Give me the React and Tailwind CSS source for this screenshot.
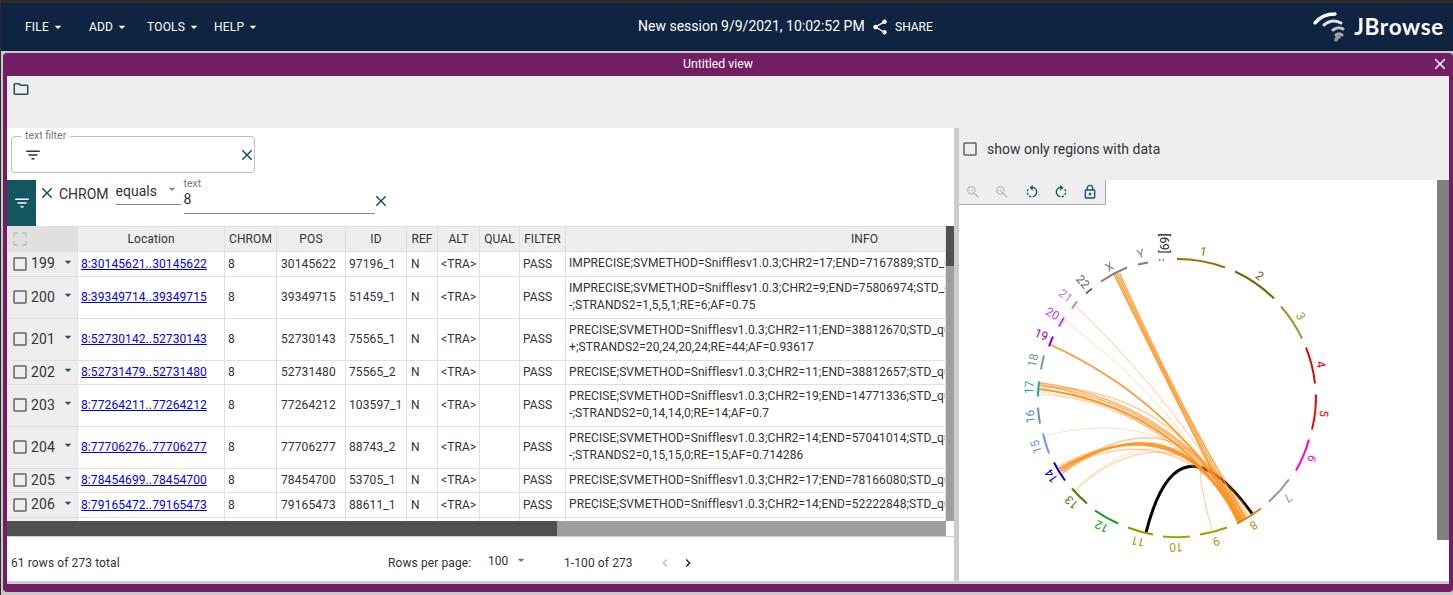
import React from "react";

const P = {
  close: "M19 6.41L17.59 5 12 10.59 6.41 5 5 6.41 10.59 12 5 17.59 6.41 19 12 13.41 17.59 19 19 17.59 13.41 12z",
  filter: "M10 18h4v-2h-4v2zM3 6v2h18V6H3zm3 7h12v-2H6v2z",
  drop: "M7 10l5 5 5-5z",
  share: "M18 16.08c-.76 0-1.44.3-1.96.77L8.91 12.7c.05-.23.09-.46.09-.7s-.04-.47-.09-.7l7.05-4.11c.54.5 1.25.81 2.04.81 1.66 0 3-1.34 3-3s-1.34-3-3-3-3 1.34-3 3c0 .24.04.47.09.7L8.04 9.81C7.5 9.31 6.79 9 6 9c-1.66 0-3 1.34-3 3s1.34 3 3 3c.79 0 1.5-.31 2.04-.81l7.12 4.16c-.05.21-.08.43-.08.65 0 1.61 1.31 2.92 2.92 2.92 1.61 0 2.92-1.31 2.92-2.92s-1.31-2.92-2.92-2.92z",
  check: "M19 5v14H5V5h14m0-2H5c-1.1 0-2 .9-2 2v14c0 1.1.9 2 2 2h14c1.1 0 2-.9 2-2V5c0-1.1-.9-2-2-2z",
  crop: "M3 5v4h2V5h4V3H5c-1.1 0-2 .9-2 2zm2 10H3v4c0 1.1.9 2 2 2h4v-2H5v-4zm14 4h-4v2h4c1.1 0 2-.9 2-2v-4h-2v4zm0-16h-4v2h4v4h2V5c0-1.1-.9-2-2-2z",
  folder: "M9.17 6l2 2H20v10H4V6h5.17M10 4H4c-1.1 0-1.99.9-1.99 2L2 18c0 1.1.9 2 2 2h16c1.1 0 2-.9 2-2V8c0-1.1-.9-2-2-2h-8l-2-2z",
  zoomOut: "M15.5 14h-.79l-.28-.27C15.41 12.59 16 11.11 16 9.5 16 5.91 13.09 3 9.5 3S3 5.91 3 9.5 5.91 16 9.5 16c1.61 0 3.09-.59 4.23-1.57l.27.28v.79l5 4.99L20.49 19l-4.99-5zm-6 0C7.01 14 5 11.99 5 9.5S7.01 5 9.5 5 14 7.01 14 9.5 11.99 14 9.5 14zM7 9h5v1H7z",
  zoomIn: "M15.5 14h-.79l-.28-.27C15.41 12.59 16 11.11 16 9.5 16 5.91 13.09 3 9.5 3S3 5.91 3 9.5 5.91 16 9.5 16c1.61 0 3.09-.59 4.23-1.57l.27.28v.79l5 4.99L20.49 19l-4.99-5zm-6 0C7.01 14 5 11.99 5 9.5S7.01 5 9.5 5 14 7.01 14 9.5 11.99 14 9.5 14zM12 10h-2v2H9v-2H7V9h2V7h1v2h2v1z",
  rotL: "M7.11 8.53L5.7 7.11C4.8 8.27 4.24 9.61 4.07 11h2.02c.14-.87.49-1.72 1.02-2.47zM6.09 13H4.07c.17 1.39.72 2.73 1.62 3.89l1.41-1.42c-.52-.75-.87-1.59-1.01-2.47zm1.01 5.32c1.16.9 2.51 1.44 3.9 1.61V17.9c-.87-.15-1.71-.49-2.46-1.03L7.1 18.32zM13 4.07V1L8.45 5.55 13 10V6.09c2.84.48 5 2.94 5 5.91s-2.16 5.43-5 5.91v2.02c3.95-.49 7-3.85 7-7.93s-3.05-7.44-7-7.93z",
  rotR: "M15.55 5.55L11 1v3.07C7.06 4.56 4 7.92 4 12s3.05 7.44 7 7.93v-2.02c-2.84-.48-5-2.94-5-5.91s2.16-5.43 5-5.91V10l4.55-4.45zM19.93 11c-.17-1.39-.72-2.73-1.62-3.89l-1.42 1.42c.54.75.88 1.6 1.02 2.47h2.02zM13 17.9v2.02c1.39-.17 2.74-.71 3.9-1.61l-1.44-1.44c-.75.54-1.59.89-2.46 1.03zm3.89-2.42l1.42 1.41c.9-1.16 1.45-2.5 1.62-3.89h-2.02c-.14.87-.48 1.72-1.02 2.48z",
  lock: "M18 8h-1V6c0-2.76-2.24-5-5-5S7 3.24 7 6v2H6c-1.1 0-2 .9-2 2v10c0 1.1.9 2 2 2h12c1.1 0 2-.9 2-2V10c0-1.1-.9-2-2-2zM9 6c0-1.66 1.34-3 3-3s3 1.34 3 3v2H9V6zm9 14H6V10h12v10zm-6-3c1.1 0 2-.9 2-2s-.9-2-2-2-2 .9-2 2 .9 2 2 2z",
  left: "M15.41 7.41L14 6l-6 6 6 6 1.41-1.41L10.83 12z",
  right: "M10 6L8.59 7.41 13.17 12l-4.58 4.59L10 18l6-6z",
};

const Icon = ({ d, className }) => (
  <svg viewBox="0 0 24 24" fill="currentColor" className={"shrink-0 " + className}>
    <path d={d} />
  </svg>
);

const menus = [
  ["FILE", "w-[64px]"],
  ["ADD", "w-[58px]"],
  ["TOOLS", "w-[67px]"],
  ["HELP", "w-[60px]"],
];

const cols = "grid grid-cols-[71px_147px_52px_69px_61px_31px_42px_40px_46px_380px]";
const cellB = "border-r border-b border-[#e0e0e0]";
const cell = cellB + " pb-[1px]";

const rows = [
  ["199", "8:30145621..30145622", "30145622", "97196_1", "h-[25px]", ["IMPRECISE;SVMETHOD=Snifflesv1.0.3;CHR2=17;END=7167889;STD_quant_start=14.5"]],
  ["200", "8:39349714..39349715", "39349715", "51459_1", "h-[42px]", ["IMPRECISE;SVMETHOD=Snifflesv1.0.3;CHR2=9;END=75806974;STD_quant_start=12.5", "-;STRANDS2=1,5,5,1;RE=6;AF=0.75"]],
  ["201", "8:52730142..52730143", "52730143", "75565_1", "h-[42px]", ["PRECISE;SVMETHOD=Snifflesv1.0.3;CHR2=11;END=38812670;STD_quant_start=0", "+;STRANDS2=20,24,20,24;RE=44;AF=0.93617"]],
  ["202", "8:52731479..52731480", "52731480", "75565_2", "h-[24px]", ["PRECISE;SVMETHOD=Snifflesv1.0.3;CHR2=11;END=38812657;STD_quant_start=0"]],
  ["203", "8:77264211..77264212", "77264212", "103597_1", "h-[42px]", ["PRECISE;SVMETHOD=Snifflesv1.0.3;CHR2=19;END=14771336;STD_quant_start=0", "-;STRANDS2=0,14,14,0;RE=14;AF=0.7"]],
  ["204", "8:77706276..77706277", "77706277", "88743_2", "h-[42px]", ["PRECISE;SVMETHOD=Snifflesv1.0.3;CHR2=14;END=57041014;STD_quant_start=0", "-;STRANDS2=0,15,15,0;RE=15;AF=0.714286"]],
  ["205", "8:78454699..78454700", "78454700", "53705_1", "h-[24px]", ["PRECISE;SVMETHOD=Snifflesv1.0.3;CHR2=17;END=78166080;STD_quant_start=0"]],
  ["206", "8:79165472..79165473", "79165473", "88611_1", "h-[25px]", ["PRECISE;SVMETHOD=Snifflesv1.0.3;CHR2=14;END=52222848;STD_quant_start=0"]],
];

const headers = ["Location", "CHROM", "POS", "ID", "REF", "ALT", "QUAL", "FILTER"];

const arcs = [
  ["1", "#a36a00", 1177, 258.5, 1225, 267, 1203, 252, 10],
  ["2", "#696900", 1235, 271, 1274, 298, 1259, 276, 35],
  ["3", "#999926", 1281, 306, 1302, 338, 1300, 316, 60],
  ["4", "#e00000", 1306, 347, 1315, 383, 1320, 364, 80],
  ["5", "#ff0000", 1316, 394, 1312, 429, 1323, 413, 97],
  ["6", "#ff00cc", 1309, 439, 1296, 470, 1311, 458, 115],
  ["7", "#a38a8a", 1289, 479, 1269, 501, 1287, 497, 133],
  ["8", "#c98a10", 1261, 508, 1237, 523, 1253, 524, 145],
  ["9", "#b09800", 1227, 527, 1200, 534, 1216, 540, 163],
  ["10", "#a3a300", 1190, 536, 1163, 536, 1176, 546, 180],
  ["11", "#8f9900", 1153, 534, 1128, 527, 1138, 540, 192],
  ["12", "#00a300", 1118, 523, 1095, 510, 1102, 525, 207],
  ["13", "#4d7a00", 1087, 503, 1072, 488, 1072, 501, 222],
  ["14", "#0000cc", 1065, 480, 1054, 462, 1052, 475, 236],
  ["15", "#6699ff", 1049, 453, 1043, 433, 1037, 446, 252],
  ["16", "#6e8fb3", 1040, 423, 1038, 407, 1031, 416, 265],
  ["17", "#00b3a6", 1038, 396, 1039, 381, 1030, 387, 271],
  ["18", "#7a9999", 1041, 369, 1044, 355, 1034, 360, 283],
  ["19", "#9900cc", 1049, 346, 1053, 336, 1041, 335, 22],
  ["20", "#cc33ff", 1059, 326, 1064, 317, 1052, 314, 30],
  ["21", "#b380e6", 1072, 308, 1077, 301, 1065, 296, 38],
  ["22", "#666666", 1086, 293, 1092, 288, 1082, 282, 48],
  ["X", "#808080", 1101, 281, 1127, 267, 1110, 267, 330],
  ["Y", "#808080", 1138, 264, 1148, 262, 1141, 254, 345],
];

const chords = [
  [1114, 274, 1238, 522, 0.85, 1.4, 402], [1115.5, 273.5, 1240, 521, 0.85, 1.4, 402], [1117.5, 273, 1243, 520, 0.85, 1.4, 402], [1119.5, 272.5, 1246, 518, 0.85, 1.4, 402],
  [1075, 305, 1243, 518, 0.5, 1, 402], [1063, 319, 1238, 520, 0.3, 1, 402], [1050, 344, 1241, 520, 0.95, 1.8, 402],
  [1039, 382, 1245, 518, 0.7, 1.6, 402], [1039, 384.5, 1243, 519, 0.7, 1.6, 404], [1039, 388.5, 1239, 521, 0.95, 2, 406], [1039, 394, 1248, 516, 0.3, 1, 402],
  [1046, 435, 1250, 513, 0.3, 1, 402],
  [1058, 466, 1244, 519, 0.5, 1.4, 402], [1059, 468, 1241, 521, 0.95, 1.8, 402], [1060, 469.5, 1240, 521, 0.8, 1.6, 398], [1061, 471, 1239, 522, 0.8, 1.6, 395], [1062, 473, 1238, 522, 0.6, 1.4, 392],
  [1073, 489, 1246, 517, 0.3, 1, 402], [1075, 490, 1248, 516, 0.3, 1, 402],
  [1212, 530, 1247, 516, 0.5, 1, 402],
  [1039, 391, 1247, 517, 0.35, 1, 412], [1062, 470, 1250, 514, 0.3, 1, 388], [1040, 386, 1251, 513, 0.25, 1, 418], [1116, 273, 1249, 515, 0.3, 1, 410],
  [1040, 383, 1240, 521, 0.45, 1.4, 416], [1041, 386, 1242, 520, 0.45, 1.4, 388], [1060, 468, 1243, 519, 0.45, 1.4, 412], [1063, 472, 1245, 518, 0.4, 1.2, 384], [1075, 490, 1238, 522, 0.3, 1, 392],
];

function Circular() {
  return (
    <svg viewBox="959 180 478 400" className="w-full h-full block">
      <g fill="none" strokeLinecap="butt">
        <path d="M1146 532 Q1177 410 1252 513" stroke="#000" strokeWidth="3" />
        {chords.map(([a, b, c, d, o, w, cy], i) => (
          <path key={i} d={`M${a} ${b} Q1177 ${cy} ${c} ${d}`} stroke="#ff9322" strokeOpacity={o} strokeWidth={w} />
        ))}
        {arcs.map(([n, col, a, b, c, d]) => (
          <path key={n} d={`M${a} ${b} A139 139 0 0 1 ${c} ${d}`} stroke={col} strokeWidth="2" />
        ))}
        <path d="M1159 259.5 L1166 259" stroke="#888" strokeWidth="2" strokeDasharray="1.5 2" />
      </g>
      <g fontSize="12" textAnchor="middle" dominantBaseline="middle" fontFamily="Roboto, sans-serif">
        {arcs.map(([n, col, , , , , x, y, r]) => (
          <text key={n} x={x} y={y} fill={col} transform={`rotate(${r} ${x} ${y})`}>{n}</text>
        ))}
        <text x="1163" y="243" fill="#222" transform="rotate(90 1163 243)">[69]</text>
      </g>
    </svg>
  );
}

export default function App() {
  return (
    <div className="w-[1453px] h-[595px] overflow-hidden bg-[#2b2b2b] pt-[3px] pl-[1px] font-[Roboto,sans-serif] text-[#333]">
      <div className="h-[592px] bg-[#c9c9c9] flex flex-col">
        <header className="h-[48px] shrink-0 bg-[#0f2440] text-white flex items-center">
          <nav className="w-[637px] pl-[24px] flex items-center text-[12px] tracking-[0.2px]">
            {menus.map(([m, w]) => (
              <div key={m} className={"flex items-center " + w}>
                <span>{m}</span>
                <Icon d={P.drop} className="w-[16px] h-[16px] ml-[1px]" />
              </div>
            ))}
          </nav>
          <span className="text-[14px] leading-none whitespace-nowrap w-[233px] mt-[-2px]">New session 9/9/2021, 10:02:52 PM</span>
          <Icon d={P.share} className="w-[18px] h-[18px]" />
          <span className="ml-[6px] text-[12px]">SHARE</span>
          <div className="ml-auto flex items-center mr-[9px]">
            <svg viewBox="1312 11 36 34" className="w-[36px] h-[34px]" fill="none" strokeLinecap="round">
              <path d="M1316 24 Q1323 15 1336 15" stroke="#fff" strokeWidth="3.4" />
              <path d="M1325 26 Q1333 19 1342 24" stroke="#e0e0e0" strokeWidth="3" />
              <path d="M1334 31 Q1339 27 1344 30" stroke="#c4c4c4" strokeWidth="3" />
              <path d="M1337 36 Q1340 33.5 1343 36" stroke="#aaa" strokeWidth="3" />
              <path d="M1337 41 Q1337.5 38.5 1340 38" stroke="#999" strokeWidth="3.4" />
            </svg>
            <span className="ml-[7px] font-[Lato,sans-serif] font-bold text-[22.5px] leading-none tracking-[0.7px]">JBrowse</span>
          </div>
        </header>

        <main className="mt-[2px] ml-[2px] h-[539px] rounded-[4px] bg-[#721e63] px-[4px] pb-[8px] flex flex-col">
          <div className="h-[23px] shrink-0 relative flex items-center justify-center text-white text-[12.3px]">
            <span className="ml-[-20px]">Untitled view</span>
            <Icon d={P.close} className="absolute right-[0px] top-[2px] w-[18px] h-[18px]" />
          </div>
          <div className="h-[52px] shrink-0 bg-[#eeeeee] pt-[4px] pl-[5px]">
            <Icon d={P.folder} className="w-[18px] h-[18px] text-[#135560]" />
          </div>

          <div className="h-[453px] shrink-0 flex">
            {/* left panel */}
            <section className="w-[947px] shrink-0 bg-white flex flex-col">
              <div className="h-[52px] shrink-0 pt-[8px] pl-[4px]">
                <div className="relative w-[244px] h-[37px] border border-[#bdbdbd] rounded-[4px] flex items-center justify-between pl-[12px] pr-0">
                  <span className="absolute left-[9px] top-[-8px] px-[4px] bg-white text-[10.5px] leading-[13px] text-[#777]">text filter</span>
                  <Icon d={P.filter} className="w-[18px] h-[18px] text-[#333]" />
                  <Icon d={P.close} className="w-[18px] h-[18px] mr-[-2px] text-[#135560]" />
                </div>
              </div>

              <div className="h-[46px] shrink-0 flex">
                <div className="w-[29px] bg-[#135560] flex items-center justify-center">
                  <Icon d={P.filter} className="w-[18px] h-[18px] text-white" />
                </div>
                <Icon d={P.close} className="w-[18px] h-[18px] ml-[2px] mt-[4px] text-[#135560]" />
                <span className="ml-[3px] mt-[5px] text-[14px] leading-[18px]">CHROM</span>
                <div className="ml-[7px] w-[65px] h-[25px] border-b border-[#888] flex justify-between text-[14px] leading-[22px]">
                  <span>equals</span>
                  <Icon d={P.drop} className="w-[16px] h-[16px] mt-[1px] mr-[1px] text-[#888]" />
                </div>
                <div className="ml-[3px] w-[191px] h-[34px] border-b border-[#888] flex flex-col">
                  <span className="text-[10.5px] leading-[12px] text-[#777] mt-[-2px]">text</span>
                  <span className="text-[14px] leading-[18px]">8</span>
                </div>
                <Icon d={P.close} className="w-[18px] h-[18px] ml-[-3px] mt-[12px] text-[#135560]" />
              </div>

              <div className="h-[310px] shrink-0 flex flex-col">
                <div className="flex-1 min-h-0 flex">
                  <div className="w-[939px] shrink-0 overflow-hidden text-[12px] tracking-[0.1px]">
                    <div className={cols + " h-[26px] bg-[#eeeeee] border-t border-[#e0e0e0]"}>
                      <div className={cellB + " bg-[#e0e0e0] flex items-center pl-[4px]"}>
                        <Icon d={P.crop} className="w-[18px] h-[18px] text-[#bbb]" />
                      </div>
                      {headers.map((h) => (
                        <div key={h} className={cellB + " flex items-center justify-center whitespace-nowrap overflow-hidden"}>{h}</div>
                      ))}
                      <div className={cellB + " flex items-center justify-center pl-[218px]"}>INFO</div>
                    </div>
                    {rows.map(([n, loc, pos, id, h, info]) => (
                      <div key={n} className={cols + " " + h}>
                        <div className={cell + " bg-[#eeeeee] flex items-center pl-[4px]"}>
                          <Icon d={P.check} className="w-[18px] h-[18px] text-[#666]" />
                          <span className="ml-[2px] text-[14px] w-[28px]">{n}</span>
                          <Icon d={P.drop} className="w-[16px] h-[16px] ml-[1px] text-[#135560] mt-[-4px]" />
                        </div>
                        <div className={cell + " flex items-center pl-[3px]"}>
                          <a href="#" className="text-[#0000ee] underline whitespace-nowrap">{loc}</a>
                        </div>
                        <div className={cell + " flex items-center pl-[3px]"}>8</div>
                        <div className={cell + " flex items-center pl-[4px]"}>{pos}</div>
                        <div className={cell + " flex items-center pl-[3px] whitespace-nowrap"}>{id}</div>
                        <div className={cell + " flex items-center pl-[4px]"}>N</div>
                        <div className={cell + " flex items-center pl-[3px]"}>&lt;TRA&gt;</div>
                        <div className={cell}></div>
                        <div className={cell + " flex items-center pl-[3px]"}>PASS</div>
                        <div className={cell + " flex flex-col justify-center pl-[3px] overflow-hidden leading-[17px] whitespace-nowrap"}>
                          {info.map((l) => <div key={l}>{l}</div>)}
                        </div>
                      </div>
                    ))}
                    <div className={cols + " h-[10px]"}>
                      {Array.from({ length: 10 }, (_, i) => (
                        <div key={i} className={"border-r border-[#e0e0e0] " + (i === 0 ? "bg-[#eeeeee]" : "")}></div>
                      ))}
                    </div>
                  </div>
                  <div className="w-[8px] shrink-0 flex flex-col bg-[#9e9e9e]">
                    <div className="h-[40px] bg-[#505050]"></div>
                  </div>
                </div>
                <div className="h-[15px] shrink-0 flex">
                  <div className="w-[550px] bg-[#505050]"></div>
                  <div className="w-[389px] bg-[#9e9e9e]"></div>
                </div>
              </div>

              <footer className="h-[45px] shrink-0 border-t border-[#d0d0d0] flex items-center text-[12px] pt-[7px]">
                <span className="pl-[4px] w-[381px] tracking-[0.1px]">61 rows of 273 total</span>
                <span className="w-[100px] tracking-[0.1px]">Rows per page:</span>
                <span className="w-[30px] mt-[-3px]">100</span>
                <Icon d={P.drop} className="w-[16px] h-[16px] mt-[-6px] text-[#777] ml-[-5px]" />
                <span className="ml-[35px] w-[93px] tracking-[0.1px]">1-100 of 273</span>
                <Icon d={P.left} className="w-[16px] h-[16px] text-[#bbb]" />
                <Icon d={P.right} className="w-[16px] h-[16px] ml-[7px] text-[#222]" />
              </footer>
            </section>

            <div className="w-[5px] shrink-0 bg-[#cccccc]"></div>

            {/* right panel */}
            <section className="flex-1 min-w-0 flex flex-col">
              <div className="h-[52px] shrink-0 bg-[#eeeeee] flex items-center pl-[2px] pb-[10px]">
                <Icon d={P.check} className="w-[18px] h-[18px] text-[#666]" />
                <span className="ml-[8px] text-[14px]">show only regions with data</span>
              </div>
              <div className="flex-1 min-h-0 flex bg-white relative">
                <div className="flex-1 min-w-0">
                  <Circular />
                </div>
                <div className="w-[12px] shrink-0 flex flex-col">
                  <div className="h-[360px] bg-[#808080]"></div>
                </div>
                <div className="absolute left-0 top-0 w-[147px] h-[25px] bg-[#eeeeee] border-r border-b border-[#aaa] flex items-center pl-[6px] gap-[13.3px]">
                  <Icon d={P.zoomOut} className="w-[16px] h-[16px] text-[#bbb]" />
                  <Icon d={P.zoomIn} className="w-[16px] h-[16px] text-[#bbb]" />
                  <Icon d={P.rotL} className="w-[16px] h-[16px] text-[#135560]" />
                  <Icon d={P.rotR} className="w-[16px] h-[16px] text-[#135560]" />
                  <Icon d={P.lock} className="w-[16px] h-[16px] text-[#135560]" />
                </div>
              </div>
            </section>
          </div>
          <div className="h-[3px] shrink-0 bg-[#cccccc]"></div>
        </main>
      </div>
    </div>
  );
}
